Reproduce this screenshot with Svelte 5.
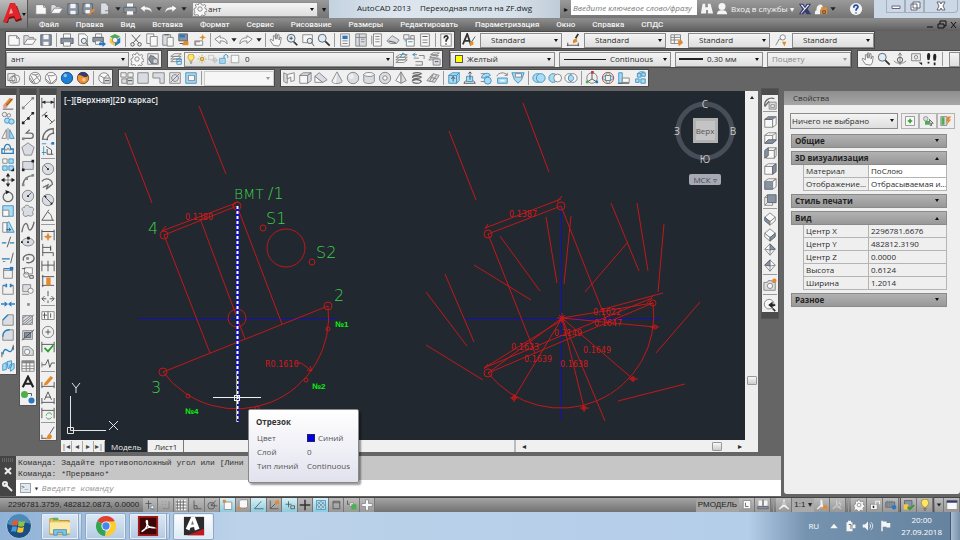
<script>
    const c = (x, y, r) => `M${x - r} ${y}a${r} ${r} 0 1 0 ${2 * r} 0a${r} ${r} 0 1 0 ${-2 * r} 0z`;

    // Each icon is a list of [paint class, path] pairs on a 16x16 grid
    const icons = {
        new: [['w', 'M2 3h9l3 3v8H2z'], ['g', 'M11 3v3h3']],
        open: [['s', 'M1 13V3h5l1 2h5v2'], ['w', 'M1 13l4-6h10l-4 6z']],
        save: [['n', 'M2 2h12v12H2z'], ['fw', 'M5 2h6v5H5zM5 10h6v4H5z']],
        saveas: [['n', 'M1 2h11v11H1z'], ['fw', 'M4 2h5v4H4zM4 9h5v4H4z'], ['fo', 'M8 13l5-6 2 2-5 5-3 1z']],
        plotfile: [['s', 'M3 1h6l3 4v9H3z'], ['g', 'M8 10h6v4H8']],
        print: [['w', 'M4 1h8v5H4z'], ['n', 'M1 6h14v6H1z'], ['w', 'M4 10h8v5H4z']],
        preview: [['w', 'M3 1h7l3 3v10H3z'], ['lens', c(9, 9, 3)], ['k', 'M11 11l3 4']],
        publish: [['w', 'M4 1h7v4H4z'], ['n', 'M1 5h12v5H1z'], ['w', 'M4 9h6v4H4z'], ['fb', 'M8 11h4V9l4 3.500-4 3.500v-2H8z']],
        dwf: [['fe', 'M8 1l6 3-6 4-6-4z'], ['fy', 'M2 5l6 4v6l-6-4z'], ['fb', 'M14 5L8 9v6l6-4z'], ['w', c(8, 8, 3)]],
        cut: [['k', 'M3 2l8 9M13 2L5 11'], ['k', c(4, 13, 2)], ['k', c(12, 13, 2)]],
        copy: [['w', 'M2 1h8v11H2z'], ['w', 'M6 4h8v11H6z']],
        paste: [['s', 'M2 2h9v12H2z'], ['w', 'M7 5h7v10H7z'], ['k', 'M4 2h5']],
        brush: [['fo', 'M9 9c3 0 4 2 3 5-2 2-5 1-7 1 2-1 2-5 4-6z'], ['k', 'M10 9l5-8M1 10v5M1 14h5']],
        match: [['n', 'M2 1h10v8H2z'], ['fb', 'M3 2h6v3H3z'], ['fo', 'M8 9h5v5H6z'], ['k', 'M3 12h4']],
        blockedit: [['w', 'M2 9h9v5H2z'], ['g', 'M3 14v-4h5'], ['fo', 'M11 1l1 3 3 1-3 1-1 3-1-3-3-1 3-1z']],
        undo: [['w', 'M1 7l6-4v2.500c5 0 8 2 8 7-2-3-4-3.500-8-3.500V12z']],
        redo: [['w', 'M15 7L9 3v2.500c-5 0-8 2-8 7 2-3 4-3.500 8-3.500V12z']],
        arrow: [['fk', 'M5 6h6l-3 4z']],
        hand: [['w', 'M5 14L1 8l1-1 3 2V3h1.500l1 4V1H9v6l1-5h1.500l0 6 1-3H14l-1 7-2 3z']],
        zoom: [['lens', c(6, 6, 4.5)], ['k2', 'M9.500 9.500l5 5']],
        zoomrt: [['lens', c(7, 6, 4.5)], ['k2', 'M10 10l4 4'], ['k', 'M5 6h4M7 4v4']],
        zoomwin: [['w', 'M2 2h11v9H2z'], ['lens', c(10, 9, 3)], ['k', 'M12 11l3 4']],
        orbit: [['k', c(8, 9, 3)], ['g', 'M1 10c3 4 11 4 14 0M8 1v14M6 4l2-3 2 3']],
        wheel: [['g', 'M3 2h10v8H3z'], ['g', c(8, 6, 2)], ['fk', 'M11 12h4v3z']],
        walk: [['fk', 'M4 1c3 0 2 6 1 8H3C2 6 2 1 4 1zM3 11h2v2H3zM11 2c3 0 2 6 1 8h-2c-1-3-1-8 1-8zM10 12h2v3h-2z']],
        props: [['w', 'M3 1h10v14H3z'], ['fb', 'M5 3h6v4H5z'], ['g', 'M5 9h6M5 12h6']],
        center: [['s', 'M2 1h12v14H2z'], ['g', 'M2 5h12M6 1v14M8 7h4M8 10h4']],
        palette: [['w', 'M4 1h9v14H4z'], ['g', 'M6 4h5M6 7h5M6 10h5M2 3v10']],
        sheet: [['s', 'M1 9l6-6 8 5-3 4H5z'], ['k', 'M3 9l8 2']],
        markup: [['g', 'M2 2h6v5H2zM10 3h4v4h-4z'], ['w', 'M5 7h9v8H5z'], ['b', 'M3 9h2M7 10h5']],
        calc: [['w', 'M3 1h10v14H3z'], ['k', 'M5 4h6'], ['g', 'M5 8h6M5 11h6']],
        help: [['w', 'M2 1h12v14H2z'], ['k2', 'M6 6c0-4 5-3 4 0-1 1-2 1-2 4M8 12v1']],
        style: [['k2', 'M1 13L6 1l4 12M3 9h6'], ['fo', 'M9 10h4v3l-4 2z'], ['k', 'M11 10l4-6']],
        dimstyle: [['k', 'M1 14h14M2 11v4M14 11v4'], ['fo', 'M8 8l4-2 1 4-5 2z'], ['k2', 'M11 6l3-5']],
        table: [['w', 'M1 2h14v12H1z'], ['fg', 'M1 2h14v3H1z'], ['g', 'M1 8h14M1 11h14M6 2v12M10 2v12']],
        tablestyle: [['w', 'M1 2h11v10H1z'], ['g', 'M1 5h11M1 8h11M5 2v10'], ['fo', 'M9 9l4-1 2 3-5 4z']],
        leader: [['g', 'M2 14l4-7h4'], ['w', c(10, 5, 3)], ['fo', 'M9 10h5l-2 5z']],
        gear: [['w', 'M7 1h2l.5 2 2 .8 2-1 1 1.500-1 2 .7 1.700 1.800.5v2l-2 .5-.8 1.700 1 2-1.500 1-2-1-1.500.8-.5 1.500h-2l-.5-2-2-.7-2 .8-1-1.500 1-1.800L1.500 10 1 8l2-1 .6-1.700-1-2L4 2.300l2 1z'], ['w', c(8, 8, 2.5)]],
        gears: [['g', 'M2 2h12v12H2z'], ['n', 'M3 8l2-4 4 1 3 3v5H6z'], ['s', 'M8 8h5v5H8z']],
        layers: [['w', 'M2 5l4-3h8l-4 3zM2 8l4-3h8l-4 3zM2 11l4-3h8l-4 3z'], ['b', 'M9 8h5v6H9zM9 11h5']],
        laymatch: [['w', 'M1 12l4-3h9l-4 3zM1 9l4-3h9l-4 3zM1 6l4-3h9l-4 3z'], ['b', 'M6 6l3-5 4 3']],
        layprev: [['g', 'M2 3h5M3 7h6M5 11h8v4H5M9 4h6v4'], ['b', 'M5 1l-3 2 3 2']],
        laystate: [['w', 'M4 3l3-2h7l-3 2zM3 6l3-2h7l-3 2zM2 9l3-2h8l-3 2z'], ['s', 'M7 8h8v7H7z'], ['k', 'M9 11h4']],
        bulb: [['y', 'M6 11c0-2-3-3-3-6a5 5 0 0 1 10 0c0 3-3 4-3 6z'], ['k', 'M6 13h4M7 15h2']],
        sun: [['o', c(8, 8, 3)], ['os', 'M8 1v2M8 13v2M1 8h2M13 8h2M3 3l1 1M12 12l1 1M13 3l-1 1M4 12l-1 1']],
        vpfreeze: [['l', 'M1 2h8v7H1z'], ['l', c(11, 10, 3)], ['l', 'M11 5v10M6 10h10']],
        lock: [['B', 'M1 7h9v8H1z'], ['b2', 'M8 7V4c0-4 6-4 6 0v2'], ['w', 'M5 10v2']],
        white: [['w', 'M2 2h12v12H2z']],
        wire2d: [['w', c(10, 9, 4.5)], ['g', 'M1 3h8v8H1z'], ['g', c(7, 10, 4)]],
        wire3d: [['w', c(8, 8, 6.5)], ['g', 'M4 3c2 2 6 2 8 0M2 8l4 6M8 4l6 8M13 5L4 13M3 5l5 9']],
        hidden: [['w', c(8, 8, 6.5)], ['g', 'M3 4c2 2 8 2 10 0M2 9l5 5M14 9l-5 5M5 6l3 8']],
        realistic: [['ballb', c(8, 8, 6.5)], ['shine', c(6, 5, 2)]],
        conceptual: [['ballo', c(8, 8, 6.5)], ['fn', 'M2 5a6.500 6.500 0 0 1 12 0c-4 5-8-2-12 0z'], ['shine', c(9, 10, 2)]],
        vsmanage: [['w', c(8, 8, 6)], ['g', 'M3 5l5 3 5-4M8 8v6'], ['s', 'M8 8h7v6H8z'], ['k', 'M9 11h5']],
        vports: [['g', 'M1 2h6v5H1zM9 2h6v5H9z'], ['s', 'M2 9h6v5H2zM8 8h7v7H8z'], ['k', 'M9 11h5']],
        vsingle: [['s', 'M2 2h12v12H2z']],
        vpoly: [['s', 'M1 2h13v12H9V8H1z']],
        vobject: [['g', 'M2 2h12v12H2z'], ['s', c(8, 8, 4)], ['g', 'M3 13L13 3']],
        vclip: [['B', 'M2 2h12v12H2z'], ['w', 'M5 5h7v6H5z']],
        polysolid: [['s', 'M2 2l4 2v10l-4-2z'], ['w', 'M6 4l8-2v9l-4 1V7L6 9z']],
        box: [['w', 'M2 5h9v9H2z'], ['s', 'M2 5l4-3h9l-4 3zM11 5l4-3v9l-4 3z']],
        wedge: [['w', 'M1 13V6l9 7z'], ['s', 'M1 6l5-4 9 8-5 3z']],
        cone: [['s', 'M8 1l6 11c-2 3-10 3-12 0z'], ['fw', 'M8 2L3 12c1 1 3 2 4 2z']],
        sphere: [['s', c(8, 8, 6.5)], ['shine', c(6, 6, 3)]],
        cylinder: [['s', 'M2 4v8c1 3 11 3 12 0V4z'], ['w', 'M2 4c1-3 11-3 12 0-1 3-11 3-12 0z']],
        torus: [['s', c(8, 8, 6.5)], ['w', c(8, 8, 2.5)]],
        pyramid: [['w', 'M8 1L2 11l6 3z'], ['s', 'M8 1l6 10-6 3z']],
        helix: [['g2', 'M3 3c4-2 9-1 10 0-3 3-9 0-10 4 4-2 9-1 10 0-3 3-9 0-10 4 4-2 9-1 10 1-2 3-7 2-10 1']],
        planar: [['s', 'M1 11l7-8 7 2-5 8z'], ['g', 'M5 7l7 2M8 4l-4 8M12 5l-5 7']],
        extrude: [['B', 'M2 5h9v9H2z'], ['B', 'M2 5l4-3h8l-3 3zM11 5l3-3v9l-3 3z'], ['k', 'M7 12V7M5 9l2-3 2 3']],
        presspull: [['B', 'M4 6h7v6H4z'], ['k', 'M1 14h13M8 10V1M6 3l2-2 2 2M3 11l-2 3M12 11l2 3']],
        sweep: [['B', 'M3 8c0-6 9-7 10-3l-4 2c0-2-3 0-2 1z'], ['B', c(10, 11, 4)], ['g', 'M2 3h5M2 12h4']],
        revolve: [['B', 'M3 8h11v6H3z'], ['g', 'M2 6c2-5 10-5 12-1M11 5l3 0 0-3'], ['fw', 'M6 10h5v2H6z']],
        loft: [['B', 'M1 2h14l-3 8-4 4-4-4z'], ['w', 'M5 3h7v4H5z']],
        union: [['B', c(6, 8, 5)], ['B', c(10, 8, 5)]],
        subtract: [['B', c(6, 8, 5)], ['w', c(11, 8, 4.5)]],
        intersect: [['w', c(6, 8, 5)], ['w', c(10, 8, 5)], ['B', 'M8 4c4 3 4 6 0 8-4-2-4-5 0-8z']],
        move3d: [['k', 'M8 1v8l-6 4M8 9l6 4'], ['g', c(8, 8, 6)], ['fr', 'M7 0h3v3H7z'], ['fe', 'M1 11h3v3H1z'], ['fb', 'M12 11h3v3h-3z']],
        rotate3d: [['rs', c(8, 8, 6.5)], ['es', 'M8 1.500c-4 3-4 10 0 13 4-3 4-10 0-13z'], ['bs', 'M1.500 8c3-4 10-4 13 0-3 4-10 4-13 0z']],
        align3d: [['B', 'M2 2h4v12H2z'], ['w', 'M6 8h8v5H6z'], ['k', 'M1 14h13']],
        array3d: [['B', 'M5 3h4v4H5zM10 2h4v4h-4zM3 9h4v4H3zM9 9h5v5H9z'], ['b', 'M5 3l3-2h5']],
        erase: [['fo', 'M3 10l7-8 4 2-7 8z'], ['fp', 'M2 11l2-2 4 2-2 3H3z'], ['k', 'M2 15h12M13 3l-7 8']],
        copyobj: [['g', c(4, 4, 2.5)], ['g', c(9, 5, 2)], ['B', c(7, 11, 3)], ['B', c(12, 12, 3)]],
        mirror: [['w', 'M6 3v10H1z'], ['B', 'M10 3v10h5z'], ['g', 'M8 1v14']],
        offset: [['b2', 'M1 13h13V8h-3c0-8-8-6-7 0H1z'], ['g', 'M4 13V9h3c0-3 2-3 2 0h3']],
        array: [['B', 'M9 1h5v5H9zM2 9h5v5H2z'], ['w', 'M2 1h5v5H2z'], ['B', 'M9 9h5v5H9z'], ['fk', 'M11 15h4v-4z']],
        move: [['k', 'M8 1v5M8 10v5M1 8h5M10 8h5'], ['fk', 'M8 0l2.500 4h-5zM8 16l2.500-4h-5zM0 8l4-2.500v5zM16 8l-4-2.500v5z'], ['w', 'M7 7h2v2H7z']],
        rotate: [['g2', c(8, 9, 5.5)], ['fk', 'M5 1l5 2-4 3z']],
        scale: [['B', 'M2 2h12v12H2z'], ['w', 'M2 7h7v7H2z']],
        stretch: [['w', 'M2 14V3h5v11z'], ['B', 'M7 3l2-1 6 12H7z'], ['k', 'M6 11h5M9 9l2 2-2 2']],
        trim: [['b2', 'M1 9h5M10 9h5'], ['k', 'M7 14l4-12']],
        extend: [['b2', 'M1 9h9'], ['k', 'M11 14l3-12'], ['g', 'M2 12h3']],
        breakpt: [['g', 'M3 3v11h10V5H3'], ['b2', 'M3 3h7'], ['fb', 'M10 1h4v4h-4z']],
        break: [['g', 'M2 4v10h12V4'], ['b2', 'M2 4h3M11 4h3'], ['fb', 'M5 2h2v4H5zM10 2h2v4h-2z']],
        join: [['b2', 'M0 8h4M12 8h4'], ['fb', 'M4 5l4 3-4 3zM12 5L8 8l4 3z']],
        chamfer: [['s', 'M2 14V8l6-6h6v12z'], ['b2', 'M2 8l6-6']],
        fillet: [['s', 'M2 14V10C2 5 5 2 10 2h4v12z'], ['b2', 'M2 10C2 5 5 2 10 2']],
        blend: [['b2', 'M2 12C5-3 10 18 14 3'], ['k', 'M1 9v6M14 1v6']],
        explode: [['B', 'M2 6l4-2v8l-4 1zM7 3l5-1v7l-4 2zM10 7l5-2v6l-4 3z']],
        line: [['g', 'M3 13L13 3'], ['fg', 'M1 12h3v3H1zM12 1h3v3h-3z']],
        xline: [['k', 'M2 14L14 2'], ['fk', 'M1 12h3v3H1zM7 7h3v3H7zM12 1h3v3h-3z']],
        pline: [['g2', 'M2 13h9c4 0 4-6 0-6H6L10 3'], ['fg', 'M1 12h3v3H1z']],
        polygon: [['s', 'M8 1l7 5-3 9H4L1 6z']],
        rect: [['s', 'M2 4h12v9H2z'], ['fk', 'M1 12h3v3H1zM12 2h3v3h-3z']],
        arc: [['g2', 'M2 14C3 7 7 3 14 3'], ['fg', 'M1 12h3v3H1zM5 5h3v3H5zM12 1h3v3h-3z']],
        circle: [['s', c(8, 8, 6.5)], ['k', 'M8 8l4-4'], ['fk', 'M7 7h2v2H7z']],
        cloud: [['s', 'M4 4c0-4 6-3 6 0 4-2 6 3 3 5 3 4-2 6-5 4-3 3-7 0-5-4-3-2-2-6 1-5z']],
        spline: [['g2', 'M1 14C3 2 7 2 8 8s5 4 7-6']],
        ellipse: [['s', 'M1 8c2-6 12-6 14 0-2 6-12 6-14 0z'], ['fk', 'M7 2h3v3H7zM7 7h2v2H7zM0 7h2v2H0z']],
        ellarc: [['g2', 'M3 11C0 4 14 1 15 8c0 5-6 6-9 5'], ['fg', 'M6 7h3v3H6z']],
        insert: [['w', 'M4 2h9v7H4z'], ['g', c(6, 10, 3)], ['k', 'M10 11h4v3h-4zM1 3h4']],
        block: [['s', 'M2 3h9v8H2z'], ['w', c(11, 10, 3)], ['g', 'M1 14h8']],
        point: [['fg', 'M7 7h3v3H7z']],
        hatch: [['s', 'M2 3h11v10H2z'], ['g', 'M1 14L15 2M2 6L6 3M2 10l9-7M5 13l8-6M9 13l4-3']],
        gradient: [['s', 'M2 3h11v10H2z'], ['n', 'M4 5h7v6H4z'], ['k', 'M1 14L15 2']],
        region: [['s', 'M2 13V3h7l5 4v6z'], ['w', c(7, 9, 3)]],
        mtext: [['k3', 'M2 14L8 2l6 12M4.500 10h7']],
        addsel: [['fe', c(4, 5, 4)], ['fb', c(12, 12, 3.5)], ['k', 'M8 4h4v3']],
        dimlin: [['k', 'M1 2v12M15 2v12M1 7h14'], ['fk', 'M1 7l4-2v4zM15 7l-4-2v4z']],
        dimali: [['k', 'M4 4l9 9M1 6l6-5M10 15l6-5'], ['fk', 'M4 4l4 1-3 3z']],
        dimarc: [['g2', 'M2 14C2 7 7 2 14 2M7 15c0-5 4-8 8-8'], ['k', 'M1 14h7M14 1v7']],
        dimord: [['b', 'M1 2h5M11 2h4M3 5v10M1 12h5'], ['k', 'M6 5l6 4v5M7 8v6h7'], ['fb', 'M12 0h3v3h-3z']],
        dimrad: [['s', c(8, 8, 6.5)], ['k', 'M8 8L4 4'], ['fk', 'M7 7h2v2H7z']],
        dimjog: [['g2', 'M1 5c4-5 12-3 12 4M2 12l6-3-2 5 6-5']],
        dimdia: [['s', c(8, 8, 6.5)], ['k', 'M4 4l8 8'], ['fk', 'M3 3h3v3zM13 13h-3l3-3z']],
        dimang: [['k', 'M1 14h14M1 14L9 2M8 5c4 2 4 5 5 9']],
        dimquick: [['k', 'M1 2v12M15 2v12M1 4h14'], ['fo', 'M8 5l1.500 3.500L13 10l-3.500 1.500L8 15l-1.500-3.500L3 10l3.500-1.500z']],
        dimbase: [['k', 'M2 1v14M2 5h9v4M2 11h12v4M11 3v5']],
        dimcont: [['k', 'M1 2v12M8 2v12M15 2v12M1 7h14']],
        dimspace: [['k', 'M1 3h14M1 13h14M2 1v14'], ['fo', 'M6 4h5v9H6z']],
        dimbreak: [['k', 'M1 10h5M10 10h5M8 1v6M8 12v3M4 7l-3 3 3 3M12 7l3 3-3 3']],
        tolerance: [['w', 'M1 3h14v9H1z'], ['k', 'M8 3v9M4 4v7M2 7h5M11 5v5']],
        centermark: [['g', c(8, 8, 6.5)], ['k', 'M8 5v6M5 8h6']],
        inspect: [['k', 'M1 2v12M15 2v12M1 5h14'], ['es2', 'M4 9l4 4 6-7']],
        jogline: [['k', 'M1 10h4l3-6 2 9 2-5h4'], ['g', 'M1 7v6']],
        dimedit: [['k', 'M1 8v7M15 8v7M1 13h14'], ['fo', 'M4 9l7-8 3 2-7 8-4 1z']],
        dimtedit: [['k', 'M1 8v7M15 8v7M1 13h14M4 10l4-9 4 9M5 7h6']],
        dimupdate: [['k', 'M1 2v12M15 2v12M1 5h14'], ['es', 'M6 11c0-4 6-4 6-1M12 13c-1 2-5 3-6 0']],
        named: [['g2', 'M2 12C1 5 7 1 13 3M2 12l5-6'], ['s', 'M7 7h8v8H7z'], ['w', 'M9 10h4v3H9z']],
        top: [['w', 'M2 5h9v9H2z'], ['n', 'M2 5l4-3h9l-4 3z'], ['w', 'M11 5l4-3v9l-4 3z']],
        bottom: [['w', 'M2 5l4-3h9v9l-4 3H2z'], ['g', 'M2 5h9v9M11 5l4-3'], ['n', 'M2 14l4-4h9l-4 4z']],
        left: [['w', 'M4 5h9v9H4z'], ['w', 'M4 5l2-3h9l-2 3zM13 5l2-3v9l-2 3z'], ['n', 'M2 5l4-3v9l-4 3z']],
        right: [['w', 'M2 5h9v9H2z'], ['w', 'M2 5l4-3h9l-4 3z'], ['n', 'M11 5l4-3v9l-4 3z']],
        front: [['n', 'M2 5h9v9H2z'], ['w', 'M2 5l4-3h9l-4 3zM11 5l4-3v9l-4 3z']],
        back: [['w', 'M2 5h9v9H2z'], ['n', 'M5 2h10v9H5z'], ['g', 'M2 5l3-3M2 14l3-3']],
        sw: [['w', 'M8 1l6 5-6 5-6-5z'], ['n', 'M2 6l6 5v4L2 10z'], ['w', 'M8 11l6-5v4l-6 5z']],
        se: [['w', 'M8 1l6 5-6 5-6-5z'], ['w', 'M2 6l6 5v4L2 10z'], ['n', 'M8 11l6-5v4l-6 5z']],
        ne: [['w', 'M8 1l6 6-6 7-6-7z'], ['n', 'M8 1l6 6-6 1z'], ['g', 'M8 8v6M2 7l6 1']],
        nw: [['w', 'M8 1l6 6-6 7-6-7z'], ['n', 'M8 1L2 7l6 1z'], ['g', 'M8 8v6M14 7L8 8']],
        camera: [['s', 'M1 5h4l1-2h4l1 2h3v9H1z'], ['w', c(8, 9, 3)], ['fo', c(13, 3, 2.5)]],
        viewback: [['w', c(7, 7, 5.5)], ['fk', 'M6 8l5-4v3h3v2h-3v3z'], ['k2', 'M11 12l3 3']],
        binoculars: [['fw', 'M3 2h3v4h3V2h3l3 11H9v-4H7v4H1z']],
        user: [['fw', c(8, 5, 4)], ['fw', 'M3 11c2-2 8-2 10 0l1 3H2z']],
        exchange: [['fn', 'M1 2h5l2 3 2-3h5l-4 6 4 6h-5l-2-3-2 3H1l4-6z'], ['fw', 'M3 3h2l3 4 3-4h2l-9 10H3l4-5z']],
        a360: [['fw', 'M3 9c-1-6 7-9 7-3l-3 3v5H1c0-3 0-4 2-5z'], ['fo', 'M8 6h7v8H8z'], ['k', 'M10 10h3v3h-3z']],
        helpball: [['fw', c(8, 8, 7)], ['bs2', 'M5.500 6.500c0-5 6-3 4.500 0-1 1-2 1-2 3.500M8 12v1']],
        snapinfer: [['k', 'M6 2v11M2 6h8'], ['w', c(11, 11, 2)], ['b', 'M9 13l5 1']],
        snap: [['fg', 'M3 3h1v1H3zM7 3h1v1H7zM3 7h1v1H3zM7 7h1v1H7zM3 11h1v1H3z'], ['g', 'M12 3v10H4']],
        grid: [['fw', 'M1 1h14v14H1z'], ['k', 'M3 1v14M7 1v14M11 1v14M1 4h14M1 8h14M1 12h14']],
        ortho: [['k', 'M4 2v11h10M4 9h4v4']],
        polar: [['k', c(7, 9, 4.5)], ['k', 'M7 9h8M7 9l6-7M7 9V6']],
        osnap: [['w', 'M3 4h10v10H3z'], ['fo', 'M1 1h4v4H1z']],
        osnap3d: [['w', 'M3 3l2-2h9v9l-2 2H3z'], ['fo', 'M1 11h4v3H1z']],
        otrack: [['k', 'M14 13H2L11 3']],
        ducs: [['k', 'M3 2v11h11M3 13l7-7'], ['fo', 'M9 3l5-2 1 5-4 2z']],
        dyn: [['k', 'M2 7h8M6 3v8'], ['k', 'M9 9h5v4H9z']],
        lwt: [['k2', 'M8 1v14M1 8h14']],
        tpy: [['B', 'M2 2h12v12H2z'], ['w', 'M4 4l8 8M8 3l5 5M3 8l5 5M12 4l-8 8M8 3L3 8M13 8l-5 5']],
        qp: [['k', 'M4 3h9v10H4zM4 5h9']],
        sc: [['k', 'M2 2v5h4'], ['w', 'M5 5h5v5H5z'], ['fe', 'M7 7h7v7H7z']],
        am: [['w', 'M6 1h4v5h5v4h-5v5H6v-5H1V6h5z']],
        model: [['w', 'M3 2h10v11H3z'], ['k', 'M6 5v5h4']],
        layout: [['n', 'M1 10h14v3H1z'], ['fw', 'M2 2h5v7H2zM9 2h5v7H9z'], ['k', 'M8 1v8']],
        scaleA: [['fw', 'M7 1h2l1 7 5 5-1 1-6-4-6 4-1-1 5-5z'], ['g', 'M8 3v5']],
        annoadd: [['fw', 'M6 1h2l1 7 4 5-1 1-5-4-5 4-1-1 5-5z'], ['fo', c(12, 11, 3)]],
        annoauto: [['l2', 'M6 2l1 6 5 5-6-3-5 3 5-5z'], ['l2', 'M11 2l-2 4h3l-2 5']],
        unlock: [['w', 'M2 7h9v7H2z'], ['fk', 'M5 9h2v3H5z'], ['w2', 'M9 7V3h5v4']],
        hardware: [['n', 'M1 4h12v7H1z'], ['g', 'M3 2v10M6 2v10M9 2v10'], ['fb', c(12, 11, 3)]],
        xref: [['n', 'M2 2h10v9H2z'], ['fy', 'M1 7h6v7H1z'], ['es2', 'M6 11l3 3 6-6']],
        clean: [['w', 'M1 2h14v12H1z'], ['fn', 'M1 2h14v3H1z']],
        flag: [['fw', 'M3 1h2v14H3zM5 2h5v7H5zM10 4h5v6h-5z']],
        sound: [['fw', 'M1 6h3l4-4v12l-4-4H1z'], ['ws', 'M10 5c2 2 2 4 0 6M12 3c3 3 3 7 0 10']],
        power: [['fw', 'M2 3h8v12H2zM4 1h4v2H4z'], ['k', 'M5 6h3v6M9 8h5M11 5v6'], ['fw', 'M10 6h4v5h-4z']],
        up: [['fw', 'M3 11l5-6 5 6z']],
        plus: [['w', 'M2 2h12v12H2z'], ['es2', 'M8 5v6M5 8h6']],
        pick: [['s', c(5, 5, 3)], ['fe', 'M4 8h6v5H4z'], ['k', 'M10 6l5 5-3 0 1 3-2 0z']],
        quick: [['s', 'M1 2h8v12H1z'], ['fe', 'M2 3h4v10H2z'], ['fo', 'M10 2h5l-3 4h3l-6 7 1-5H8z']]
    };

    const menus = ['Файл', 'Правка', 'Вид', 'Вставка', 'Формат', 'Сервис', 'Рисование', 'Размеры', 'Редактировать', 'Параметризация', 'Окно', 'Справка', 'СПДС'];

    const quickAccess = ['new', 'open', 'save', 'saveas', 'plotfile', 'arrow', 'print', 'undo', 'arrow', 'redo', 'arrow'];

    const standardBar = ['new', 'open', 'save', '|', 'print', 'preview', 'publish', 'dwf', '|', 'cut', 'copy', 'paste', 'match', 'blockedit', '|', 'undo', 'arrow', 'redo', 'arrow', '|', 'hand', 'zoomrt', 'zoomwin', 'zoom', '|', 'props', 'center', 'palette', 'sheet', 'markup', 'calc', '|', 'help'];
    const styleBars = ['style', 'dimstyle', 'tablestyle', 'leader'];

    const visualBar = ['wire2d', '|', 'wire3d', 'hidden', 'realistic', 'conceptual', '|', 'vsmanage'];
    const viewportBar = ['vports', 'vsingle', 'vpoly', 'vobject', 'vclip', '|'];
    const modelingBar = ['polysolid', 'box', 'wedge', 'cone', 'sphere', 'cylinder', 'torus', 'pyramid', 'helix', 'planar', '|', 'extrude', 'presspull', 'sweep', 'revolve', 'loft', '|', 'union', 'subtract', 'intersect', '|', 'move3d', 'rotate3d', 'align3d', 'array3d'];

    const modifyBar = ['erase', 'copyobj', 'mirror', 'offset', 'array', 'move', 'rotate', 'scale', 'stretch', 'trim', 'extend', 'breakpt', 'break', 'join', 'chamfer', 'fillet', 'blend', 'explode'];
    const drawBar = ['line', 'xline', 'pline', 'polygon', 'rect', 'arc', 'circle', 'cloud', 'spline', 'ellipse', 'ellarc', 'insert', 'block', 'point', 'hatch', 'gradient', 'region', 'table', 'mtext', 'addsel'];
    const dimBar = ['dimlin', 'dimali', 'dimarc', 'dimord', '|', 'dimrad', 'dimjog', 'dimdia', 'dimang', '|', 'dimquick', 'dimbase', 'dimcont', 'dimspace', 'dimbreak', '|', 'tolerance', 'centermark', 'inspect', 'jogline', '|', 'dimedit', 'dimtedit', 'dimupdate', '|', 'brush'];
    const viewBar = ['named', '|', 'top', 'bottom', 'left', 'right', 'front', 'back', '|', 'sw', 'se', 'ne', 'nw', '|', 'camera', '|', 'viewback'];

    const modes = ['snapinfer', 'snap', 'grid', 'ortho', 'polar', 'osnap', 'osnap3d', 'otrack', 'ducs', 'dyn', 'lwt', 'tpy', 'qp', 'sc', 'am'];
    let activeModes = $state(['osnap', 'otrack', 'dyn', 'tpy']);

    function toggleMode(name) {
        activeModes = activeModes.includes(name)
            ? activeModes.filter((m) => m !== name)
            : [...activeModes, name];
    }

    let command = $state('');

    let sections = $state([
        { title: 'Общие', open: false, rows: [] },
        { title: '3D визуализация', open: true, editable: true, rows: [['Материал', 'ПоСлою'], ['Отображение...', 'Отбрасываемая и...']] },
        { title: 'Стиль печати', open: false, rows: [] },
        {
            title: 'Вид',
            open: true,
            rows: [['Центр X', '2296781.6676'], ['Центр Y', '482812.3190'], ['Центр Z', '0.0000'], ['Высота', '0.6124'], ['Ширина', '1.2014']]
        },
        { title: 'Разное', open: false, rows: [] }
    ]);

    const redLines = [
        'M125 133L152 203M199 106L226 174',
        'M162 231L236 203M164 235L237 206L282 324M164 235L210 353M201 221L245 339',
        'M163 372L328 306M162 231l4-5M232 206l6-5M295 363h6l11 8m-5-1l5 1-2-5',
        'M328 306A92 92 0 0 1 163 372',
        'M449 131L476 200M523 103L549 172',
        'M485 228L561 199M488 234L561 206L608 325M488 234L535 353M485 229l3-5M557 202l5-6',
        'M500 236L540 291M474 265L531 300M546 217L557 283M571 216L564 284',
        'M611 203L639 271M637 203L648 271M664 224L658 292M628 242L585 292',
        'M445 274L474 342M426 292L467 346M426 345L483 380M700 302L656 353M618 401L685 384',
        'M562 318L653 303M562 318L655 327M562 318L633 379M562 318L584 408M562 318L514 398M562 318L488 373M562 318L605 421',
        'M488 373L653 303M484 368L652 298M484 368L562 320M600 310L663 293M484 369l4-5M647 303l6-7',
        'M653 303A93 93 0 0 1 488 373',
        'M557 318h10M562 313v10M559 315l6 6M565 315l-6 6',
        'M629 379h9M633 376v6M580 408h9M584 405v7M510 398h8M514 394v8M650 327h9'
    ];
    const redCircles = [
        [237, 206, 4], [164, 235, 4], [328, 306, 4], [163, 372, 4], [237, 318, 9],
        [328, 329, 2], [306, 380, 2], [257, 408, 2], [188, 396, 2],
        [263, 228, 3], [286, 248, 19], [312, 262, 3],
        [561, 206, 4], [488, 234, 4], [653, 303, 3], [655, 327, 2], [633, 379, 2], [584, 408, 2], [514, 398, 2], [488, 373, 4], [562, 318, 2]
    ];
    const dimTexts = [
        [185, 220, '0.1380'], [265, 367, 'R0.1610'], [509, 217, '0.1387'], [593, 315, '0.1622'], [594, 326, '0.1647'],
        [554, 336, '0.3149'], [511, 350, '0.1633'], [524, 362, '0.1639'], [583, 353, '0.1649'], [560, 367, '0.1638']
    ];
    const greenTexts = [
        [148, 234, '4'], [266, 224, 'S1'], [316, 258, 'S2'], [334, 301, '2'], [151, 393, '3']
    ];
    const marks = [[335, 327, '№1'], [312, 389, '№2'], [185, 414, '№4']];
</script>

{#snippet icon(name)}
    <svg class="icon" viewBox="0 0 16 16" aria-hidden="true">
        {#each icons[name] as [paint, d]}
            <path class={paint} {d} />
        {/each}
    </svg>
{/snippet}

{#snippet tools(list)}
    {#each list as name}
        {#if name === '|'}
            <span class="sep"></span>
        {:else}
            <button class="tool" class:narrow={name === 'arrow'} aria-label={name}>{@render icon(name)}</button>
        {/if}
    {/each}
{/snippet}

{#snippet combo(label, value, size)}
    <label class="combo {size}">
        <select aria-label={label}><option>{value}</option></select>
    </label>
{/snippet}

<div class="app">
    <header>
        <button class="app-button" aria-label="AutoCAD">
            <svg viewBox="0 0 28 28">
                <path fill="#7d0e12" d="M3 22L11 5l6 1 5 14-6 2-2-4-5 1-1 4z" />
                <path fill="#e0262c" d="M3 22L10 3h5l6 15-5 2-2-4-5 1-2 5z" />
                <path fill="#f8a5a0" d="M11 8l-2 6 4-1z" />
                <path fill="#111" d="M22 13h4l-2 3z" />
            </svg>
        </button>
        <div class="titlebar">
            <div class="quick">{@render tools(quickAccess)}</div>
            <label class="combo workspace">
                {@render icon('gear')}
                <select aria-label="Рабочее пространство"><option>ант</option></select>
            </label>
            <button class="more" aria-label="Настройка панели">▾</button>
            <h1><span>AutoCAD 2013</span><span>Переходная плита на ZF.dwg</span></h1>
            <button class="more" aria-label="Свернуть поиск">▸</button>
            <input class="search" aria-label="Поиск" placeholder="Введите ключевое слово/фразу" />
            <div class="services">
                <button class="tool" aria-label="Найти">{@render icon('binoculars')}</button>
                <button class="login">{@render icon('user')} Вход в службы ▾</button>
                <button class="tool" aria-label="Exchange">{@render icon('exchange')}</button>
                <button class="tool" aria-label="Autodesk 360">{@render icon('a360')}</button>
                <button class="tool narrow" aria-label="Меню">{@render icon('arrow')}</button>
                <button class="tool ball" aria-label="Справка">{@render icon('helpball')}</button>
            </div>
            <div class="window-controls">
                <button aria-label="Свернуть"><svg viewBox="0 0 12 10"><path d="M2 5h8v2.500H2z" /></svg></button>
                <button aria-label="Развернуть"><svg viewBox="0 0 12 10"><path d="M4 1h7v6H4zM2 3h6v6H2z" /></svg></button>
                <button class="close" aria-label="Закрыть"><svg viewBox="0 0 12 10"><path d="M2 1h3l1 2 1-2h3L8 5l2 4H7L6 7 5 9H2l2-4z" /></svg></button>
            </div>
        </div>
        <nav>
            {#each menus as item}
                <button>{item}</button>
            {/each}
            <div class="doc-controls">
                <svg viewBox="0 0 32 10"><path d="M1 7h6M12 4h6v4h-6zM14 4V1h6v5h-2M25 2l5 6M30 2l-5 6" /></svg>
            </div>
        </nav>
    </header>

    <div class="bars">
        <div class="bar-row">
            <div class="bar">{@render tools(standardBar)}</div>
            <div class="bar styles">
                {#each styleBars as name}
                    <button class="tool" aria-label={name}>{@render icon(name)}</button>
                    {@render combo(name, 'Standard', 'style-box')}
                {/each}
            </div>
        </div>
        <div class="bar-row">
            <div class="bar">
                {@render combo('Рабочее пространство', 'ант', 'wide')}
                {@render tools(['gear', 'gears'])}
            </div>
            <div class="bar">
                {@render tools(['layers'])}
                <label class="combo layer">
                    {@render icon('bulb')}{@render icon('sun')}{@render icon('vpfreeze')}{@render icon('lock')}{@render icon('white')}
                    <select aria-label="Слой"><option>0</option></select>
                </label>
                {@render tools(['laymatch', 'layprev', 'laystate'])}
            </div>
            <div class="bar object-props">
                <label class="combo color">
                    <span class="swatch yellow"></span>
                    <select aria-label="Цвет"><option>Желтый</option></select>
                </label>
                <label class="combo linetype">
                    <span class="rule"></span>
                    <select aria-label="Тип линий"><option>Continuous</option></select>
                </label>
                <label class="combo weight">
                    <span class="rule thick"></span>
                    <select aria-label="Вес линий"><option>0.30 мм</option></select>
                </label>
                <label class="combo plot">
                    <select aria-label="Стиль печати" disabled><option>Поцвету</option></select>
                </label>
            </div>
            <div class="bar last">
                {@render tools(['hand', 'zoom', 'orbit', 'wheel', 'walk', '|'])}
                <label class="combo rest"><select aria-label="Вид"><option></option></select></label>
            </div>
        </div>
        <div class="bar-row">
            <div class="bar">{@render tools(visualBar)}</div>
            <div class="bar">
                {@render tools(viewportBar)}
                <label class="combo blank"><select aria-label="Масштаб" disabled><option></option></select></label>
            </div>
            <div class="bar">{@render tools(modelingBar)}</div>
        </div>
    </div>

    <div class="workspace-area">
        <div class="left-side">
            <div class="editor">
                <div class="side-bars">
                    <div class="vbar">{@render tools(modifyBar)}</div>
                    <div class="vbar">{@render tools(drawBar)}</div>
                    <div class="vbar">{@render tools(dimBar)}</div>
                </div>

                <main>
                    <div class="viewport">
                        <svg class="drawing" viewBox="61 91 684 349" preserveAspectRatio="xMinYMin meet">
                            <path class="axis" d="M138 318.500H337M464 318.500H661M561.500 206V420" />
                            <g class="red">
                                {#each redLines as d}
                                    <path {d} />
                                {/each}
                                {#each redCircles as [cx, cy, r]}
                                    <circle {cx} {cy} {r} />
                                {/each}
                            </g>
                            <path class="hot" d="M237.500 206V422" />
                            <path class="hot-dash" d="M237.500 206V422" />
                            {#each dimTexts as [x, y, label]}
                                <text class="dim" {x} {y}>{label}</text>
                            {/each}
                            {#each greenTexts as [x, y, label]}
                                <text class="green" {x} {y}>{label}</text>
                            {/each}
                            <text class="green small" x="234" y="199">ВМТ</text>
                            <text class="green" x="268" y="199">/1</text>
                            {#each marks as [x, y, label]}
                                <text class="mark" {x} {y}>{label}</text>
                            {/each}
                            <path class="cross-y" d="M236.500 374V422" />
                            <path class="cross-x" d="M213 397.500H261M234.500 395.500h5v5h-5z" />
                            <path class="ucs" d="M70.500 396V430.500H106M67.500 427.500h6v6h-6zM72 383l4 5 4-5M76 388v5M109 421l9 9M118 421l-9 9" />
                            <text class="view-label" x="64" y="103">[−][Верхняя][2D каркас]</text>
                        </svg>
                        <div class="viewcube">
                            <svg viewBox="0 0 64 70" aria-hidden="true">
                                <circle cx="32" cy="33" r="27" />
                                <text x="32" y="10">С</text>
                                <text x="4" y="37">З</text>
                                <text x="60" y="37">В</text>
                                <text x="32" y="65">Ю</text>
                            </svg>
                            <button class="cube">Верх</button>
                            <button class="ucs-menu">МСК ▿</button>
                        </div>
                    </div>
                    <div class="vscroll"><span class="up"></span><span class="thumb"></span></div>
                    <div class="tabs">
                        <button class="nav" aria-label="Первый">|◂</button>
                        <button class="nav" aria-label="Назад">◂</button>
                        <button class="nav" aria-label="Вперед">▸</button>
                        <button class="nav" aria-label="Последний">▸|</button>
                        <button class="tab active">Модель</button>
                        <button class="tab">Лист1</button>
                        <div class="hscroll"><span>◂</span><span class="thumb"></span><span>▸</span></div>
                    </div>
                </main>

                <div class="view-bar">
                    <div class="vbar">{@render tools(viewBar)}</div>
                </div>
            </div>

            <div class="command">
                <div class="command-side">
                    <svg viewBox="0 0 16 40">
                        <path class="dots" d="M2 3h12M2 5h12" />
                        <path d="M5 12l6 6M11 12l-6 6" />
                        <path d="M5 28l7 7" />
                        <circle cx="5" cy="28" r="2" />
                    </svg>
                </div>
                <div class="command-main">
                    <div class="history">
                        <p>Команда: Задайте противоположный угол или [Лини</p>
                        <p>Команда: *Прервано*</p>
                    </div>
                    <label class="prompt">
                        <span class="prompt-icon">&gt;_</span>
                        <span>▾</span>
                        <input bind:value={command} placeholder="Введите команду" aria-label="Команда" />
                    </label>
                </div>
            </div>
        </div>

        <aside>
            <h2>Свойства</h2>
            <div class="selection">
                {@render combo('Выбор', 'Ничего не выбрано', 'fill')}
                {@render tools(['plus', 'pick', 'quick'])}
            </div>
            {#each sections as section}
                <section>
                    <button class="section-title" onclick={() => (section.open = !section.open)}>
                        {section.title}<span class="tri" class:open={section.open}></span>
                    </button>
                    {#if section.open}
                        <table class:editable={section.editable}>
                            <tbody>
                                {#each section.rows as [name, value]}
                                    <tr><th scope="row">{name}</th><td>{value}</td></tr>
                                {/each}
                            </tbody>
                        </table>
                    {/if}
                </section>
            {/each}
        </aside>

        <!-- Rollover tooltip of the highlighted line -->
        <div class="tooltip" role="tooltip">
            <strong>Отрезок</strong>
            <dl>
                <dt>Цвет</dt><dd><span class="swatch blue"></span>Синий</dd>
                <dt>Слой</dt><dd>0</dd>
                <dt>Тип линий</dt><dd>Continuous</dd>
            </dl>
        </div>
    </div>

    <div class="status">
        <span class="coords">2296781.3759, 482812.0873, 0.0000</span>
        <div class="modes">
            {#each modes as name}
                <button
                    class="tool"
                    class:on={activeModes.includes(name)}
                    aria-label={name}
                    aria-pressed={activeModes.includes(name)}
                    onclick={() => toggleMode(name)}
                >
                    {@render icon(name)}
                </button>
            {/each}
        </div>
        <div class="status-right">
            <button class="space">РМОДЕЛЬ</button>
            {@render tools(['model', 'layout', '|', 'scaleA'])}
            <button class="scale">1:1 ▾</button>
            {@render tools(['annoadd', 'annoauto', '|', 'gear', 'unlock', 'hardware'])}
            <div class="tray-box">{@render tools(['xref', 'bulb'])}</div>
            {@render tools(['arrow', 'clean'])}
        </div>
    </div>

    <footer>
        <button class="start" aria-label="Пуск">
            <svg viewBox="0 0 28 28">
                <circle cx="14" cy="14" r="12.500" fill="#1c4f80" stroke="#a9cbe6" />
                <path fill="#6fb0dc" opacity=".6" d="M3 12a11 11 0 0 1 22 0c-7-4-15 4-22 0z" />
                <path fill="#e8582c" d="M8 9c2-1 4-1 5 0l-1 5c-2-1-3-1-5 0z" />
                <path fill="#8cc63f" d="M14 9c2 1 4 1 6 0l-1 5c-2 1-4 1-6 0z" />
                <path fill="#3f9be0" d="M7 15c2-1 3-1 5 0l-1 5c-2-1-3-1-5 0z" />
                <path fill="#fcc22c" d="M13 15c2 1 4 1 6 0l-1 5c-2 1-4 1-6 0z" />
            </svg>
        </button>
        <button class="task stacked" aria-label="Проводник">
            <svg viewBox="0 0 24 24">
                <path fill="#e9c45f" stroke="#b98f2e" d="M1 4h8l2 2h11v15H1z" />
                <path fill="#6aaf50" d="M4 3h6v3H4z" />
                <path fill="#fbe9a5" d="M1 8h22v12H1z" />
                <path fill="#7cc4e8" stroke="#4a94bd" d="M5 22v-6h14v6h-4v-3H9v3z" />
            </svg>
        </button>
        <button class="task" aria-label="Google Chrome">
            <svg viewBox="0 0 24 24">
                <path fill="#de4032" d="M12 12L2.500 6.500a11 11 0 0 1 19 0z" />
                <path fill="#35a452" d="M12 12l-1 11A11 11 0 0 1 2.500 6.500z" />
                <path fill="#fccd33" d="M12 7h9.800A11 11 0 0 1 11 23l5-9z" />
                <circle cx="12" cy="12" r="5" fill="#fff" />
                <circle cx="12" cy="12" r="4" fill="#4587ec" />
            </svg>
        </button>
        <button class="task stacked" aria-label="Adobe Reader">
            <svg viewBox="0 0 24 24">
                <path fill="#3c0707" stroke="#a51b1b" stroke-width="2" d="M2 2h20v20H2z" />
                <path fill="none" stroke="#fff" stroke-width="1.500" d="M5 18c4-1 8-8 6-12-2-1-1 9 8 8-4-2-9 0-14 4z" />
            </svg>
        </button>
        <button class="task current" aria-label="AutoCAD 2013">
            <svg viewBox="0 0 24 24">
                <path fill="#2c2c2c" d="M1 2h22v20H1z" />
                <path fill="#c3181f" d="M5 22l18-7v7z" />
                <path fill="#fff" d="M3 15L9 2h4l5 13-5 2-1-4-4 1-1 3z" />
                <path fill="#777" d="M10 6l-1 5 3-1z" />
            </svg>
        </button>
        <div class="tray">
            <span class="lang">RU</span>
            {@render tools(['up', 'power', 'sound', 'flag'])}
            <time><span>20:00</span><span>27.09.2018</span></time>
            <button class="peek" aria-label="Свернуть все окна"></button>
        </div>
    </footer>
</div>

<style>
    :global(body) {
        background: #656565;
    }

    .app {
        min-height: 100vh;
        display: flex;
        flex-direction: column;
        overflow: hidden;
        background: #656565;
        color: #2b2b2b;
        font: 8px/12px "Open Sans", "Noto Sans", sans-serif;
    }

    button,
    select,
    input {
        margin: 0;
        padding: 0;
        border: 0;
        background: none;
        color: inherit;
        font: inherit;
        min-width: 0;
    }

    /* Icon paints */
    .icon { width: 14px; height: 14px; flex: none; display: block; }
    .icon path { fill: none; stroke: none; }
    .icon .g { stroke: #7c7c7c; }
    .icon .g2 { stroke: #6c6c6c; stroke-width: 1.5; }
    .icon .k { stroke: #4a4a4a; }
    .icon .k2 { stroke: #333; stroke-width: 2; }
    .icon .k3 { stroke: #222; stroke-width: 2.5; }
    .icon .b { stroke: #2a90c8; }
    .icon .b2 { stroke: #2a80b8; stroke-width: 1.5; }
    .icon .l { stroke: #b4b4b4; }
    .icon .l2 { stroke: #d4d4d4; }
    .icon .w { fill: #f8f8f8; stroke: #808080; }
    .icon .w2 { stroke: #f0f0f0; stroke-width: 1.5; }
    .icon .ws { stroke: #fff; }
    .icon .s { fill: #d9dde3; stroke: #808080; }
    .icon .n { fill: #8792a2; stroke: #59606b; }
    .icon .B { fill: #a9dcf5; stroke: #3b8fc0; }
    .icon .y { fill: #ffe468; stroke: #a48420; }
    .icon .o { fill: #ffc83c; stroke: #8a6a20; }
    .icon .os { stroke: #a48420; }
    .icon .rs { stroke: #d03a3a; }
    .icon .es { stroke: #3a9a3a; }
    .icon .es2 { stroke: #28a028; stroke-width: 2; }
    .icon .bs { stroke: #3a6ac8; }
    .icon .bs2 { stroke: #1d4ea0; stroke-width: 2; }
    .icon .lens { fill: #dceefa; stroke: #555; }
    .icon .fg { fill: #888; }
    .icon .fk { fill: #222; }
    .icon .fw { fill: #f4f4f4; }
    .icon .fb { fill: #2a78c0; }
    .icon .fe { fill: #4cae4c; }
    .icon .fy { fill: #f2c744; }
    .icon .fo { fill: #e38a2c; }
    .icon .fp { fill: #e89a9a; }
    .icon .fr { fill: #c83232; }
    .icon .fn { fill: #343a72; }
    .icon .ballb { fill: #1d7fd6; stroke: #0c4d8c; }
    .icon .ballo { fill: #f0922c; stroke: #6a4a3a; }
    .icon .shine { fill: #fff; opacity: 0.5; }

    .tool {
        width: 16px;
        height: 16px;
        display: flex;
        align-items: center;
        justify-content: center;
        flex: none;
    }

    .tool.narrow {
        width: 9px;
    }

    .sep {
        width: 1px;
        height: 14px;
        margin: 0 2px;
        background: #9a9a9a;
        flex: none;
    }

    /* Title and menu */
    header {
        display: grid;
        grid-template-columns: 28px 1fr;
        grid-template-rows: 18px 13px;
        background: linear-gradient(#9a9a9a, #747474 58%, #8e8e8e 60%, #5e5e5e);
    }

    .app-button {
        grid-row: 1 / 3;
        height: 28px;
        border-right: 1px solid #555;
        background: linear-gradient(#bbb, #777);
    }

    .app-button svg {
        width: 28px;
        display: block;
    }

    .titlebar {
        display: flex;
        align-items: stretch;
        min-width: 0;
    }

    .quick {
        display: flex;
        align-items: center;
        width: 164px;
        padding-left: 5px;
        box-sizing: border-box;
    }

    .combo {
        position: relative;
        display: flex;
        align-items: center;
        height: 15px;
        box-sizing: border-box;
        border: 1px solid #8c8c8c;
        background: linear-gradient(#f4f4f4, #dedede);
        flex: none;
        min-width: 0;
    }

    .combo::after {
        content: "";
        position: absolute;
        right: 3px;
        top: 5px;
        border: 2px solid transparent;
        border-top: 3px solid #111;
    }

    .combo select {
        appearance: none;
        flex: 1;
        height: 100%;
        padding: 0 8px 0 4px;
        opacity: 1;
    }

    .workspace {
        width: 126px;
        align-self: center;
    }

    .workspace select {
        padding-left: 1px;
    }

    .more {
        width: 11px;
        color: #111;
    }

    h1 {
        flex: 1;
        display: flex;
        justify-content: center;
        gap: 9px;
        margin: 0;
        font-size: 8px;
        line-height: 16px;
        font-weight: 400;
        color: #222;
        white-space: nowrap;
        background: linear-gradient(90deg, #c4d2e0, #dde6ee 30%, #d6e0ea 80%, #c0ccd8);
    }

    .search {
        width: 126px;
        height: 15px;
        padding-left: 2px;
        box-sizing: border-box;
        background: #fff;
        font-style: italic;
    }

    .search::placeholder {
        color: #777;
    }

    .services {
        display: flex;
        align-items: center;
        width: 177px;
        padding-left: 2px;
        box-sizing: border-box;
        color: #f4f4f4;
    }

    .login {
        display: flex;
        align-items: center;
        gap: 2px;
        margin-right: 3px;
        white-space: nowrap;
    }

    .services .ball {
        margin-left: 10px;
    }

    .window-controls {
        display: flex;
        width: 86px;
        padding-left: 12px;
        box-sizing: border-box;
        background: #ccd8e5;
    }

    .window-controls button {
        height: 13px;
        width: 19px;
        border: 1px solid #a2afbd;
        border-top: 0;
    }

    .window-controls .close {
        width: 34px;
        border-radius: 0 0 4px 0;
    }

    .window-controls svg {
        width: 12px;
        display: block;
        margin: auto;
        fill: #fff;
        stroke: #667;
    }

    nav {
        display: flex;
        align-items: center;
        gap: 17px;
        padding-left: 11px;
        color: #f2f2f2;
        font-family: Roboto, "Open Sans", sans-serif;
        font-weight: 500;
    }

    nav button {
        line-height: 12px;
        white-space: nowrap;
    }

    .doc-controls {
        margin-left: auto;
        padding-right: 2px;
    }

    .doc-controls svg {
        width: 32px;
        height: 10px;
        display: block;
        fill: none;
        stroke: #111;
    }

    /* Toolbars */
    .bars {
        display: flex;
        flex-direction: column;
        gap: 3px;
        padding: 1px 0;
        background: #656565;
    }

    .bar-row {
        display: flex;
        gap: 7px;
        padding-left: 6px;
        height: 16px;
    }

    .bar {
        display: flex;
        align-items: center;
        flex: none;
        background: #f0f0f0;
        outline: 1px solid #4a4a4a;
    }

    .styles {
        gap: 3px;
    }

    .style-box {
        width: 82px;
    }

    .style-box select {
        padding-left: 10px;
    }

    .wide {
        width: 123px;
    }

    .layer {
        width: 210px;
        gap: 1px;
        padding-left: 1px;
    }

    .layer .icon {
        width: 10px;
        height: 10px;
    }

    .object-props {
        gap: 4px;
        margin-left: 1px;
    }

    .color { width: 105px; padding-left: 4px; }
    .linetype { width: 112px; padding-left: 4px; }
    .weight { width: 88px; padding-left: 3px; }
    .plot { width: 84px; color: #888; }

    .rest {
        flex: 1;
        margin-left: 4px;
    }

    .blank {
        width: 70px;
        border-color: #ccc;
        background: #f6f6f6;
    }

    .plot::after,
    .blank::after {
        border-top-color: #999;
    }

    .rest::after {
        display: none;
    }

    .rule {
        width: 42px;
        height: 1px;
        background: #222;
    }

    .thick {
        width: 24px;
        height: 2px;
    }

    .swatch {
        display: inline-block;
        width: 6px;
        height: 6px;
        border: 1px solid #555;
        flex: none;
    }

    .yellow { background: #ff0; }
    .blue { background: #0000e0; }

    .last {
        flex: 1;
        padding-left: 2px;
        overflow: hidden;
    }

    /* Workspace */
    .workspace-area {
        flex: 1;
        display: flex;
        position: relative;
        gap: 3px;
        padding: 2px 0 1px;
    }

    .left-side {
        flex: 1;
        display: flex;
        flex-direction: column;
        gap: 4px;
        min-width: 0;
    }

    .editor {
        flex: 1;
        display: flex;
        gap: 4px;
        padding-right: 3px;
    }

    .side-bars {
        display: flex;
        align-items: flex-start;
        gap: 4px;
        padding-right: 1px;
    }

    .vbar {
        display: flex;
        flex-direction: column;
        align-items: center;
        background: #f0f0f0;
        border-top: 6px solid #4c4c4c;
        outline: 1px solid #555;
    }

    .vbar .tool {
        height: 15px;
    }

    .vbar .tool:nth-of-type(even) {
        height: 16px;
    }

    .vbar .sep {
        width: 14px;
        height: 1px;
        margin: 1px 0 2px;
    }

    main {
        flex: 1;
        display: grid;
        grid-template-columns: 1fr 13px;
        grid-template-rows: 1fr 12px;
        min-width: 0;
        padding-top: 2px;
    }

    .viewport {
        position: relative;
        background: #212830;
        overflow: hidden;
    }

    .drawing {
        display: block;
        width: 100%;
        height: auto;
        fill: none;
    }

    .red { stroke: #c41818; }
    .axis { stroke: #1010b4; shape-rendering: crispEdges; }
    .hot { stroke: #0a0ae0; stroke-width: 3; }
    .hot-dash { stroke: #fff; stroke-width: 2; stroke-dasharray: 3 2; }
    .dim { fill: #d01c1c; font: 8px "DejaVu Sans", sans-serif; }
    .green { fill: #40d048; font: 200 16px "DejaVu Sans", sans-serif; }
    .green.small { font-size: 14px; }
    .mark { fill: #10f010; font: bold 8px "Liberation Sans", sans-serif; }
    .cross-x { stroke: #f0f0f0; shape-rendering: crispEdges; }
    .cross-y { stroke: #a8a868; }
    .ucs { stroke: #e4e4e4; }
    .view-label { fill: #f0f0f0; font: 600 8px "Open Sans", sans-serif; }

    .viewcube {
        position: absolute;
        right: 8px;
        top: 7px;
        width: 64px;
        display: flex;
        flex-direction: column;
        align-items: center;
    }

    .viewcube svg {
        width: 64px;
    }

    .viewcube circle {
        fill: none;
        stroke: #474e57;
        stroke-width: 5;
    }

    .viewcube text {
        fill: #c8c8c8;
        font-size: 10px;
        text-anchor: middle;
    }

    .cube {
        position: absolute;
        top: 20px;
        width: 25px;
        height: 25px;
        background: #c4c4c4;
        border: 3px solid #b2b2b2;
        color: #555;
        line-height: 12px;
    }

    .ucs-menu {
        width: 32px;
        height: 11px;
        margin-top: 6px;
        border-radius: 2px;
        background: #a6a8b4;
        color: #4a4a55;
        line-height: 10px;
    }

    .vscroll {
        display: flex;
        flex-direction: column;
        align-items: center;
        background: #eee;
        padding: 3px 0;
    }

    .vscroll .up {
        border: 2px solid transparent;
        border-bottom: 3px solid #222;
    }

    .thumb {
        width: 10px;
        height: 9px;
        box-sizing: border-box;
        border: 1px solid #999;
        border-radius: 1px;
        background: linear-gradient(#f8f8f8, #ccc);
    }

    .vscroll .thumb {
        margin-top: auto;
        margin-bottom: 52px;
    }

    .tabs {
        grid-column: 1 / 3;
        display: flex;
        align-items: center;
        background: #f0f0f0;
    }

    .nav {
        width: 11px;
        height: 11px;
        border-right: 1px solid #aaa;
        color: #444;
        line-height: 10px;
        white-space: nowrap;
    }

    .tab {
        height: 12px;
        padding: 0 6px;
        border-right: 1px solid #777;
        line-height: 11px;
    }

    .tab.active {
        background: #212830;
        color: #eee;
    }

    .hscroll {
        display: flex;
        align-items: center;
        justify-content: space-between;
        width: 35%;
        margin-left: auto;
        padding: 0 16px 0 6px;
        box-sizing: border-box;
        border-left: 2px solid #bbb;
    }

    .hscroll .thumb {
        margin-left: auto;
        margin-right: 16px;
    }

    .view-bar .vbar {
        border-bottom: 6px solid #4c4c4c;
    }

    /* Command line */
    .command {
        display: flex;
        background: #444;
    }

    .command-side {
        width: 16px;
    }

    .command-side svg {
        width: 16px;
        display: block;
        fill: none;
        stroke: #eee;
        stroke-width: 2;
    }

    .command-side .dots {
        stroke: #888;
        stroke-width: 1;
        stroke-dasharray: 1 1;
    }

    .command-main {
        flex: 1;
        min-width: 0;
    }

    .history {
        padding: 1px 2px;
        background: #c6c6c6;
        font: 8px/11px "Liberation Mono", monospace;
        color: #333;
    }

    .history p {
        margin: 0;
        white-space: nowrap;
        overflow: hidden;
    }

    .prompt {
        display: flex;
        align-items: center;
        gap: 3px;
        height: 16px;
        padding-left: 4px;
        background: #fff;
        font: 8px/11px "Liberation Mono", monospace;
    }

    .prompt-icon {
        width: 9px;
        line-height: 8px;
        border: 1px solid #9aa4ae;
        background: #e4e9ee;
        font-size: 6px;
    }

    .prompt input {
        flex: 1;
        font-style: italic;
        outline: none;
    }

    .prompt input::placeholder {
        color: #999;
    }

    /* Properties palette */
    aside {
        width: 176px;
        box-sizing: border-box;
        padding: 0 13px 0 7px;
        margin: 2px 0;
        border-radius: 0 0 3px 3px;
        background: #efefef;
    }

    h2 {
        margin: 0 -13px 8px -7px;
        padding-left: 9px;
        font-size: 8px;
        line-height: 14px;
        font-weight: 400;
        color: #333;
        background: linear-gradient(#8e8e8e, #a6a6a6);
    }

    .selection {
        display: flex;
        margin: 0 -8px 5px -1px;
    }

    .fill {
        flex: 1;
        height: 16px;
        margin-right: 3px;
    }

    .fill select {
        padding-left: 1px;
    }

    .selection .tool {
        width: 18px;
        box-sizing: border-box;
        border: 1px solid #b4b4b4;
    }

    .selection .icon {
        width: 12px;
        height: 12px;
    }

    section {
        margin-bottom: 3px;
    }

    .section-title {
        width: 100%;
        height: 14px;
        padding: 0 7px 0 3px;
        display: flex;
        align-items: center;
        justify-content: space-between;
        border: 1px solid #8a8a8a;
        background: linear-gradient(#b2b2b2, #989898);
        font-weight: 700;
        color: #222;
    }

    .tri {
        border: 2px solid transparent;
        border-top: 3px solid #111;
        margin-top: 1px;
    }

    .tri.open {
        border-top: 0;
        border-bottom: 3px solid #111;
    }

    table {
        width: calc(100% - 12px);
        margin-left: 12px;
        border-collapse: collapse;
        table-layout: fixed;
    }

    th,
    td {
        height: 12px;
        padding: 0 2px;
        border: 1px solid #b4b4b4;
        border-top: 0;
        line-height: 12px;
        font-weight: 400;
        text-align: left;
        white-space: nowrap;
        overflow: hidden;
    }

    th {
        width: 60px;
    }

    .editable td {
        background: #fff;
    }

    .tooltip {
        position: absolute;
        left: 248px;
        top: 322px;
        width: 111px;
        height: 74px;
        box-sizing: border-box;
        padding: 6px 7px;
        border: 1px solid #888;
        border-radius: 2px;
        background: linear-gradient(#fff, #e2e2ee);
        box-shadow: 2px 2px 2px rgba(0, 0, 0, 0.4);
        color: #555;
    }

    .tooltip strong {
        display: block;
        color: #333;
    }

    dl {
        display: grid;
        grid-template-columns: 50px 1fr;
        row-gap: 2px;
        margin: 4px 0 0 1px;
    }

    dt,
    dd {
        margin: 0;
        white-space: nowrap;
    }

    dd .swatch {
        margin-right: 3px;
        border-color: #226;
        vertical-align: -1px;
    }

    /* Status bar */
    .status {
        display: flex;
        align-items: center;
        height: 15px;
        border-top: 1px solid #444;
        background: linear-gradient(#a4a4a4, #727272);
        box-sizing: border-box;
        font: 8px/14px "Liberation Sans", sans-serif;
        color: #222;
    }

    .coords {
        width: 135px;
        padding-left: 8px;
        white-space: nowrap;
    }

    .modes,
    .status-right {
        display: flex;
        align-items: center;
    }

    .status .tool {
        height: 14px;
        box-sizing: border-box;
        border-right: 1px solid #777;
        background: linear-gradient(#bcbcbc, #989898);
    }

    .modes .tool:nth-child(odd) {
        width: 15px;
    }

    .status .icon {
        width: 12px;
        height: 12px;
    }

    .status .tool.on {
        background: linear-gradient(#d8f0f6, #8ccbdc);
    }

    .status-right {
        margin-left: auto;
    }

    .space {
        height: 14px;
        padding: 0 2px;
        background: #a4a4a4;
    }

    .scale {
        height: 14px;
        width: 22px;
        background: #aaa;
        white-space: nowrap;
    }

    .tray-box {
        display: flex;
        margin: 0 2px;
        outline: 1px solid #555;
    }

    /* Taskbar */
    footer {
        display: flex;
        align-items: center;
        height: 28px;
        background: linear-gradient(90deg, #90b2d6, #bcd2ea 25%, #b4cde9 78%, #7592ae 84%, #64829e);
    }

    .start {
        width: 28px;
        margin: 0 8px 0 5px;
    }

    .start svg {
        width: 28px;
        display: block;
    }

    .task {
        width: 41px;
        height: 27px;
        margin-right: 3px;
        box-sizing: border-box;
        border: 1px solid #8ea8c4;
        border-radius: 2px;
        background: linear-gradient(#dce8f4, #b4cae2);
        box-shadow: inset 0 0 0 1px #e6f0fa;
    }

    .task svg {
        width: 22px;
        display: block;
        margin: auto;
    }

    .stacked {
        border-right: 4px double #8ea8c4;
    }

    .current {
        background: linear-gradient(#fff, #dce8f4);
    }

    .tray {
        display: flex;
        align-items: center;
        margin-left: auto;
        height: 100%;
        color: #fff;
    }

    .tray .tool {
        width: 17px;
    }

    .tray .icon {
        width: 12px;
        height: 12px;
    }

    .lang {
        margin-right: 6px;
    }

    time {
        display: flex;
        flex-direction: column;
        align-items: center;
        margin: 0 8px;
    }

    .peek {
        width: 10px;
        height: 28px;
        border-left: 1px solid #3f5b75;
        background: linear-gradient(90deg, #a8bccf, #7891aa);
    }
</style>
